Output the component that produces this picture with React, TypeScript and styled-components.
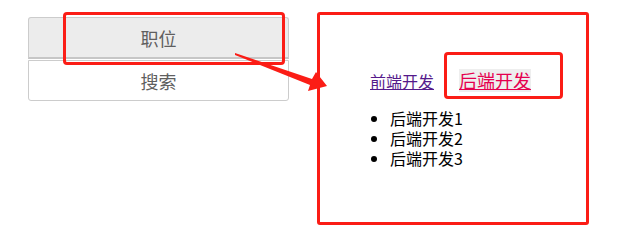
import React from 'react'
import styled, { createGlobalStyle } from 'styled-components'

const GlobalStyle = createGlobalStyle`
  body {
    margin: 0;
    background: #fff;
    font-family: "Noto Sans CJK SC", "Noto Sans", sans-serif;
  }
`

const Page = styled.div`
  position: relative;
  width: 633px;
  height: 249px;
  display: flex;
  align-items: flex-start;
  padding: 12px 0 0 28px;
  box-sizing: border-box;
  gap: 28px;
`

const ButtonGroup = styled.div`
  display: flex;
  flex-direction: column;
  width: 261px;
  margin-top: 5px;
`

const GroupButton = styled.button<{ $active?: boolean }>`
  height: ${(p) => (p.$active ? '42px' : '41px')};
  margin-top: ${(p) => (p.$active ? '0' : '1px')};
  padding: 0;
  border: 1px solid #ccc;
  border-bottom: ${(p) => (p.$active ? '2px solid #c6c6c6' : '1px solid #ccc')};
  border-radius: ${(p) => (p.$active ? '3px 3px 0 0' : '0 0 3px 3px')};
  background: ${(p) => (p.$active ? '#ececec' : '#fff')};
  color: #5f5f5f;
  font-family: "Noto Sans CJK SC", sans-serif;
  font-size: 18px;
  line-height: 1;
  box-sizing: border-box;
`

const Panel = styled.div`
  width: 272px;
  height: 213px;
  border: 3px solid #fb1d16;
  border-radius: 3px;
  box-sizing: border-box;
  padding: 54px 0 0 50px;
`

const Tabs = styled.div`
  display: flex;
  align-items: baseline;
  gap: 25px;
`

const TabLink = styled.a<{ $current?: boolean }>`
  font-size: ${(p) => (p.$current ? '18px' : '16px')};
  line-height: 23px;
  color: ${(p) => (p.$current ? '#e5004f' : '#551a8b')};
  background: ${(p) => (p.$current ? '#eee' : 'transparent')};
  text-decoration: underline;
  cursor: pointer;
`

const List = styled.ul`
  margin: 15px 0 0 -20px;
  padding-left: 40px;
  font-size: 16px;
  line-height: 20px;
  color: #000;
`

const Mark = styled.div<{ $x: number; $y: number; $w: number; $h: number }>`
  position: absolute;
  left: ${(p) => p.$x}px;
  top: ${(p) => p.$y}px;
  width: ${(p) => p.$w}px;
  height: ${(p) => p.$h}px;
  border: 3px solid #fb1d16;
  border-radius: 4px;
  box-sizing: border-box;
  pointer-events: none;
`

const ArrowLayer = styled.svg`
  position: absolute;
  left: 0;
  top: 0;
  pointer-events: none;
`

export default function App() {
  return (
    <>
      <GlobalStyle />
      <Page>
        <ButtonGroup>
          <GroupButton $active>职位</GroupButton>
          <GroupButton>搜索</GroupButton>
        </ButtonGroup>
        <Panel>
          <Tabs>
            <TabLink>前端开发</TabLink>
            <TabLink $current>后端开发</TabLink>
          </Tabs>
          <List>
            <li>后端开发1</li>
            <li>后端开发2</li>
            <li>后端开发3</li>
          </List>
        </Panel>
        <Mark $x={63} $y={12} $w={222} $h={53} />
        <Mark $x={444} $y={52} $w={119} $h={47} />
        <ArrowLayer width="633" height="249">
          <polygon
            points="235,53 312,79 316,72 327,86 308,91 310,85 235,55"
            fill="#fb1d16"
          />
        </ArrowLayer>
      </Page>
    </>
  )
}
